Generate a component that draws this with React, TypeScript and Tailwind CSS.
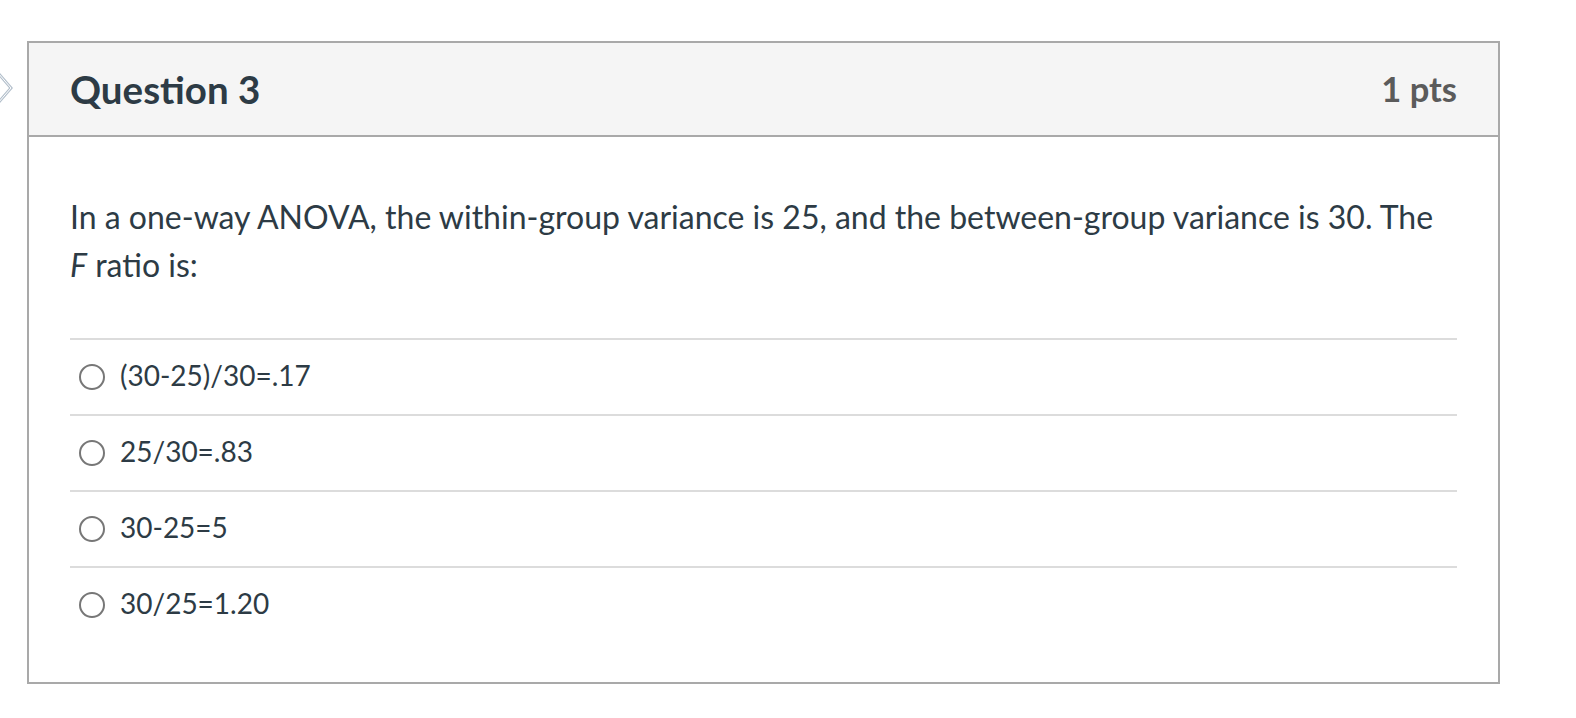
import React from 'react';

const answers = ['(30-25)/30=.17', '25/30=.83', '30-25=5', '30/25=1.20'];

const Chevron = () => (
  <svg width="14" height="32" viewBox="0 0 14 32" className="mt-[31px]">
    <path d="M-2 1 L11 16 L-2 31" fill="none" stroke="#b4c0cc" strokeWidth="3" />
    <path d="M-2 1 L11 16 L-2 31" fill="none" stroke="#ffffff" strokeWidth="1" />
  </svg>
);

export default function App() {
  return (
    <div className="min-h-screen w-full bg-white font-['Lato','Noto_Sans',sans-serif] pt-[41px]">
      <div className="flex">
        <div className="w-[27px] flex-shrink-0">
          <Chevron />
        </div>
        <div className="w-[1473px] border-2 border-[#a9a9a9]">
          {/* Header */}
          <div className="h-[94px] flex items-center justify-between px-[41px] bg-[#f5f5f5] border-b-2 border-[#a9a9a9]">
            <h2 className="text-[38.5px] font-bold text-[#2d3b45] leading-none">Question 3</h2>
            <span className="text-[34.5px] font-bold text-[#5b5b5b] leading-none">1 pts</span>
          </div>

          {/* Body */}
          <div className="px-[41px] pt-[56px] pb-[40px]">
            <p className="text-[32px] leading-[48px] text-[#2d3b45] whitespace-nowrap">
              In a one-way ANOVA, the within-group variance is 25, and the between-group variance is 30. The
              <br />
              <i>F</i> ratio is:
            </p>
            <ul className="mt-[49px]">
              {answers.map((a) => (
                <li key={a} className="h-[76px] flex items-center border-t-2 border-[#dcdcdc]">
                  <span className="ml-[9px] w-[26px] h-[26px] rounded-full border-2 border-[#777] flex-shrink-0" />
                  <span className="ml-[15px] pb-[5px] text-[28px] text-[#2d3b45]">{a}</span>
                </li>
              ))}
            </ul>
          </div>
        </div>
      </div>
    </div>
  );
}
